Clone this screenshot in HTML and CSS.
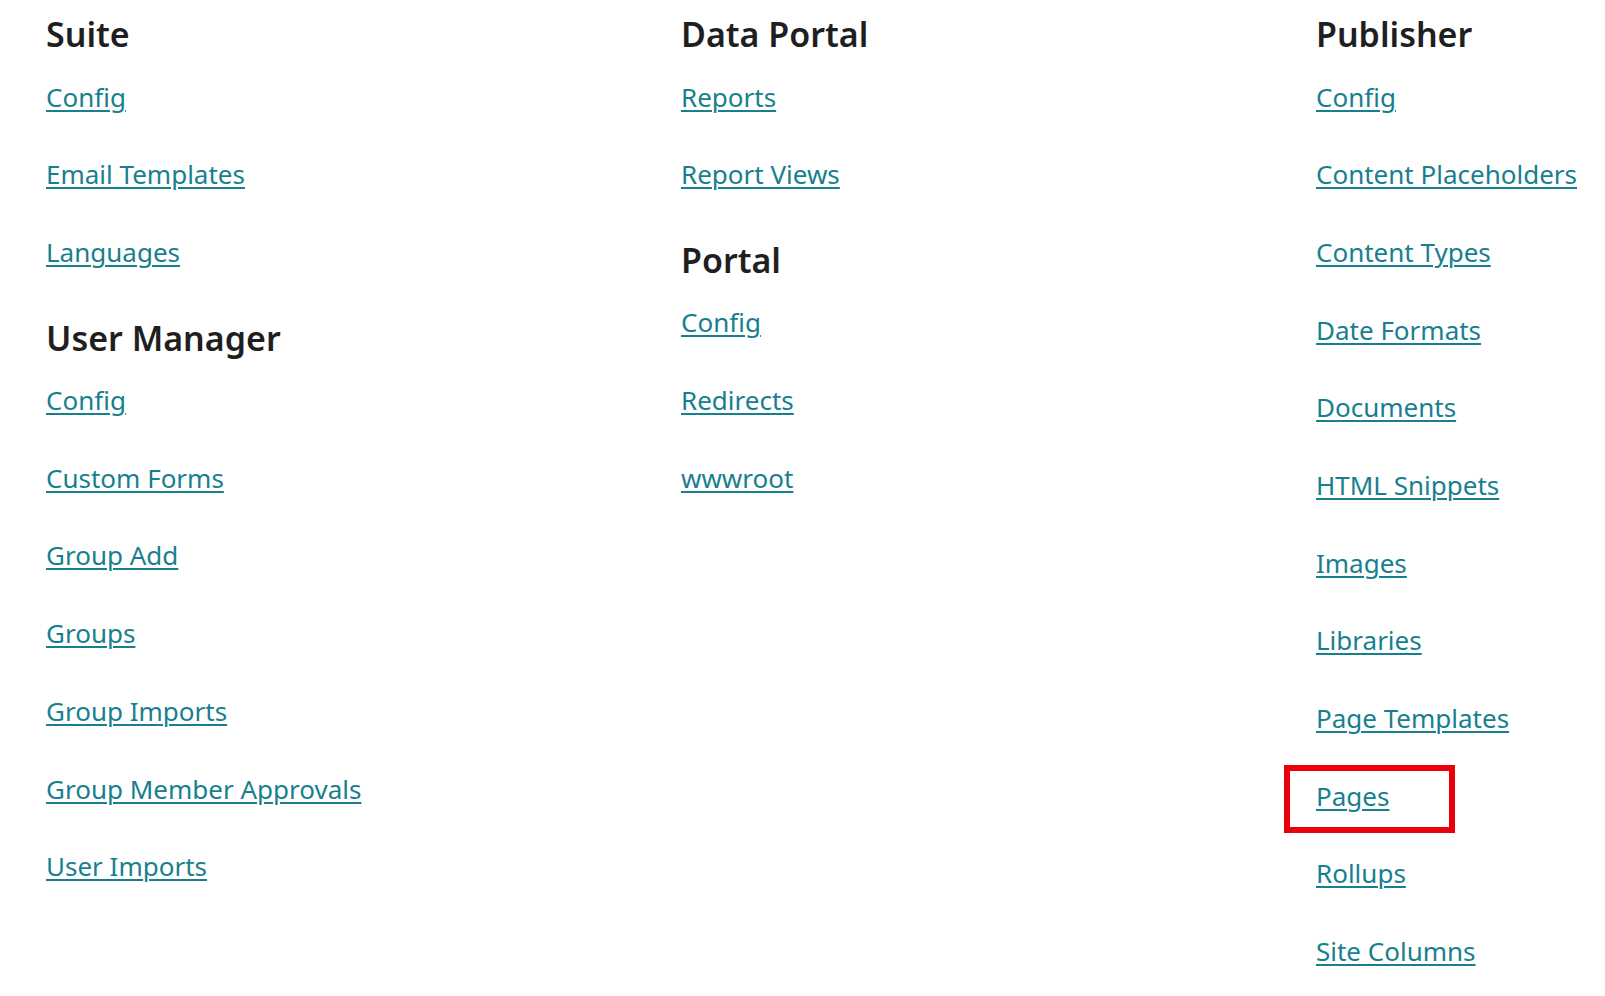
FILE: index.html
```html
<!DOCTYPE html>
<html lang="en">
<head>
<meta charset="utf-8">
<title>Admin</title>
<link rel="stylesheet" href="styles.css">
</head>
<body>
<main class="sitemap">
  <div class="col">
    <section class="group">
      <h2 class="group-title">Suite</h2>
      <ul class="links">
        <li><a href="#">Config</a></li>
        <li><a href="#">Email Templates</a></li>
        <li><a href="#">Languages</a></li>
      </ul>
    </section>
    <section class="group">
      <h2 class="group-title">User Manager</h2>
      <ul class="links">
        <li><a href="#">Config</a></li>
        <li><a href="#">Custom Forms</a></li>
        <li><a href="#">Group Add</a></li>
        <li><a href="#">Groups</a></li>
        <li><a href="#">Group Imports</a></li>
        <li><a href="#">Group Member Approvals</a></li>
        <li><a href="#">User Imports</a></li>
      </ul>
    </section>
  </div>
  <div class="col">
    <section class="group">
      <h2 class="group-title">Data Portal</h2>
      <ul class="links">
        <li><a href="#">Reports</a></li>
        <li><a href="#">Report Views</a></li>
      </ul>
    </section>
    <section class="group">
      <h2 class="group-title">Portal</h2>
      <ul class="links">
        <li><a href="#">Config</a></li>
        <li><a href="#">Redirects</a></li>
        <li><a href="#">wwwroot</a></li>
      </ul>
    </section>
  </div>
  <div class="col">
    <section class="group">
      <h2 class="group-title">Publisher</h2>
      <ul class="links">
        <li><a href="#">Config</a></li>
        <li><a href="#">Content Placeholders</a></li>
        <li><a href="#">Content Types</a></li>
        <li><a href="#">Date Formats</a></li>
        <li><a href="#">Documents</a></li>
        <li><a href="#">HTML Snippets</a></li>
        <li><a href="#">Images</a></li>
        <li><a href="#">Libraries</a></li>
        <li><a href="#">Page Templates</a></li>
        <li class="highlighted"><a href="#">Pages</a><span class="callout" aria-hidden="true"></span></li>
        <li><a href="#">Rollups</a></li>
        <li><a href="#">Site Columns</a></li>
      </ul>
    </section>
  </div>
</main>
</body>
</html>
```

FILE: styles.css
```css
html, body {
  margin: 0;
  padding: 0;
  background: #ffffff;
}

body {
  font-family: "Noto Sans", "Open Sans", "Liberation Sans", sans-serif;
  color: #1f1f1f;
  overflow: hidden;
}

.sitemap {
  display: grid;
  grid-template-columns: 635px 635px 1fr;
  padding: 11px 0 0 46px;
}

.group + .group {
  margin-top: 23px;
}

.group-title {
  margin: 0;
  font-size: 34px;
  font-weight: 600;
  line-height: 46px;
  color: #1f1f1f;
}

.links {
  list-style: none;
  margin: 1.5px 0 0;
  padding: 0;
}

.links li {
  position: relative;
  line-height: 77.7px;
  height: 77.7px;
  white-space: nowrap;
}

.links a {
  font-size: 26px;
  color: #187f8e;
  text-decoration: underline;
  text-decoration-thickness: 1.5px;
  text-underline-offset: 3px;
}

.callout {
  position: absolute;
  left: -32px;
  top: 7px;
  width: 171px;
  height: 68px;
  box-sizing: border-box;
  border: 6px solid #e8000b;
  pointer-events: none;
}
```
